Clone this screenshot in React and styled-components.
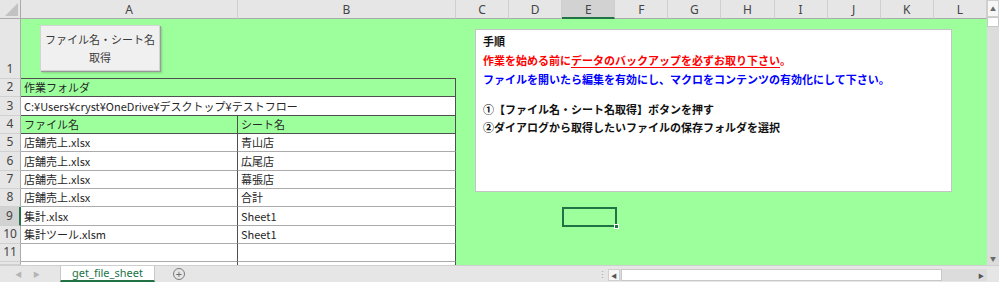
import React from 'react';
import styled, { createGlobalStyle } from 'styled-components';

const GREEN = '#9cff9c';
const DARK = '#4f4f4f';
const HAIR = '#ababab';
const HEAD = '#e6e6e6';
const HEAD_SEL = '#d2d2d2';
const XL = '#217346';
const CJK = '"Noto Sans CJK JP", "Noto Sans", sans-serif';

const GlobalStyle = createGlobalStyle`
  html, body { margin: 0; padding: 0; background: #ffffff; }
  body { width: 1006px; height: 292px; overflow: hidden; font-family: ${CJK}; }
`;

const Window = styled.div`
  width: 1006px;
  height: 292px;
  background: #ffffff;
  display: flex;
  flex-direction: column;
`;

const Sheet = styled.div`
  position: relative;
  display: grid;
  grid-template-columns: 21px 217px 218px repeat(10, 53.1px) 12px 7px;
  grid-template-rows: 19px 60px 18px 19px 18px 18px 19px 18px 18px 19px 18px 18px 3px;
`;

const Corner = styled.div`
  grid-column: 1;
  grid-row: 1;
  position: relative;
  background: ${HEAD};
  border-right: 1px solid ${HAIR};
  border-bottom: 1px solid ${HAIR};
  box-sizing: border-box;
  &::after {
    content: '';
    position: absolute;
    right: 2px;
    bottom: 2px;
    border-style: solid;
    border-width: 0 0 13px 13px;
    border-color: transparent transparent #c2c2c2 transparent;
  }
`;

const ColHead = styled.div`
  grid-column: ${p => p.$c};
  grid-row: 1;
  box-sizing: border-box;
  background: ${p => (p.$sel ? HEAD_SEL : HEAD)};
  border-right: 1px solid #cfcfcf;
  border-bottom: ${p => (p.$sel ? `2px solid ${XL}` : `1px solid ${HAIR}`)};
  display: flex;
  align-items: center;
  justify-content: center;
  font-family: "Noto Sans", sans-serif;
  font-size: 12px;
  color: #444;
  padding-top: ${p => (p.$sel ? '1px' : '0')};
`;

const RowHead = styled.div`
  grid-column: 1;
  grid-row: ${p => p.$r};
  box-sizing: border-box;
  background: ${p => (p.$sel ? HEAD_SEL : HEAD)};
  border-right: ${p => (p.$sel ? `2px solid ${XL}` : `1px solid ${HAIR}`)};
  border-bottom: 1px solid #d0d0d0;
  display: flex;
  align-items: flex-end;
  justify-content: center;
  padding-bottom: 1px;
  line-height: 16px;
  font-family: "Noto Sans", sans-serif;
  font-size: 12px;
  color: #444;
  overflow: hidden;
`;

const Cell = styled.div`
  grid-column: ${p => p.$c};
  grid-row: ${p => p.$r};
  box-sizing: border-box;
  background: ${p => (p.$green ? GREEN : '#ffffff')};
  border-right: ${p => (p.$br ? `1px solid ${DARK}` : 'none')};
  border-bottom: ${p => (p.$bb === 'dark' ? `1px solid ${DARK}` : p.$bb === 'hair' ? `1px solid ${HAIR}` : 'none')};
  display: flex;
  align-items: flex-end;
  padding: 0 0 1px 3px;
  line-height: 16px;
  font-family: ${CJK};
  font-size: 11px;
  color: #262626;
  white-space: nowrap;
`;

const GreenField = styled.div`
  grid-column: 4 / 14;
  grid-row: 2 / 14;
  background: ${GREEN};
`;

const VScroll = styled.div`
  grid-column: 14;
  grid-row: 1 / 14;
  background: #dcdcdc;
  display: flex;
  flex-direction: column;
  align-items: stretch;
`;

const ArrowBox = styled.div`
  height: ${p => p.$h}px;
  display: flex;
  align-items: center;
  justify-content: center;
  font-size: 6px;
  color: #6a6a6a;
  background: ${p => (p.$white ? '#f7f7f7' : 'transparent')};
  box-sizing: border-box;
  border: ${p => (p.$white ? '1px solid #cfcfcf' : 'none')};
`;

const VThumb = styled.div`
  height: 10px;
  background: #ffffff;
  border: 1px solid #c8c8c8;
  box-sizing: border-box;
`;

const Track = styled.div`
  flex: 1;
`;

const MacroButton = styled.div`
  position: absolute;
  left: 40px;
  top: 25px;
  width: 120px;
  height: 46px;
  box-sizing: border-box;
  background: #f0f0f0;
  border: 1px solid #d4d4d4;
  box-shadow: 1px 1px 0 #9a9a9a, 2px 2px 2px rgba(0, 0, 0, 0.18);
  display: flex;
  flex-direction: column;
  align-items: center;
  justify-content: center;
  font-family: ${CJK};
  font-size: 11px;
  line-height: 18px;
  color: #3a3a3a;
`;

const NoteBox = styled.div`
  position: absolute;
  left: 475px;
  top: 29px;
  width: 477px;
  height: 163px;
  box-sizing: border-box;
  background: #ffffff;
  border: 1px solid #c4c4c4;
  padding: 2px 0 0 7px;
  font-family: ${CJK};
  font-size: 11px;
  font-weight: 700;
  line-height: 19px;
`;

const NoteLine = styled.div`
  color: ${p => p.$color || '#111'};
  margin-top: ${p => p.$mt || 0}px;
  white-space: nowrap;
`;

const Underlined = styled.span`
  text-decoration: underline;
  text-decoration-thickness: 1px;
  text-underline-offset: 2px;
`;

const Selection = styled.div`
  position: absolute;
  left: 562px;
  top: 207px;
  width: 55px;
  height: 20px;
  box-sizing: border-box;
  border: 2px solid ${XL};
  &::after {
    content: '';
    position: absolute;
    right: -4px;
    bottom: -4px;
    width: 5px;
    height: 5px;
    box-sizing: border-box;
    background: ${XL};
    border: 1px solid #ffffff;
  }
`;

const TabBar = styled.div`
  width: 999px;
  height: 17px;
  background: #e6e6e6;
  border-top: 1px solid #cfcfcf;
  box-sizing: border-box;
  display: flex;
  align-items: stretch;
`;

const Nav = styled.div`
  width: 60px;
  display: flex;
  align-items: center;
  gap: 11px;
  padding-left: 15px;
  box-sizing: border-box;
  font-size: 7px;
  color: #b5b5b5;
`;

const Tab = styled.div`
  width: 95px;
  background: #ffffff;
  box-sizing: border-box;
  border-left: 1px solid #c8c8c8;
  border-right: 1px solid #c8c8c8;
  border-bottom: 2px solid ${XL};
  display: flex;
  align-items: center;
  justify-content: center;
  font-family: "Noto Sans", sans-serif;
  font-size: 11px;
  color: ${XL};
  line-height: 14px;
`;

const PlusWrap = styled.div`
  width: 45px;
  display: flex;
  align-items: center;
  padding-left: 18px;
  box-sizing: border-box;
`;

const Plus = styled.div`
  width: 12px;
  height: 12px;
  border-radius: 50%;
  border: 1px solid #7a7a7a;
  box-sizing: border-box;
  display: flex;
  align-items: center;
  justify-content: center;
  font-family: "Noto Sans", sans-serif;
  font-size: 11px;
  line-height: 10px;
  color: #6a6a6a;
`;

const Spacer = styled.div`
  flex: 1;
`;

const Dots = styled.div`
  width: 12px;
  display: flex;
  align-items: center;
  justify-content: center;
  font-size: 9px;
  color: #a0a0a0;
`;

const HScroll = styled.div`
  width: 379px;
  height: 12px;
  margin-top: 3px;
  margin-right: 12px;
  display: flex;
  align-items: stretch;
  background: #dcdcdc;
`;

const HArrow = styled.div`
  width: ${p => p.$w}px;
  display: flex;
  align-items: center;
  justify-content: center;
  font-size: 6px;
  color: #555;
  background: ${p => (p.$white ? '#f7f7f7' : 'transparent')};
  box-sizing: border-box;
  border: ${p => (p.$white ? '1px solid #cfcfcf' : 'none')};
`;

const HThumb = styled.div`
  width: 321px;
  margin-left: 1px;
  background: #ffffff;
  border: 1px solid #c8c8c8;
  box-sizing: border-box;
`;

const COLS = ['A', 'B', 'C', 'D', 'E', 'F', 'G', 'H', 'I', 'J', 'K', 'L'];

const rows = [
  ['店舗売上.xlsx', '青山店'],
  ['店舗売上.xlsx', '広尾店'],
  ['店舗売上.xlsx', '幕張店'],
  ['店舗売上.xlsx', '合計'],
  ['集計.xlsx', 'Sheet1'],
  ['集計ツール.xlsm', 'Sheet1'],
  ['', ''],
];

export default function App() {
  return (
    <Window>
      <GlobalStyle />
      <Sheet>
        <Corner />
        {COLS.map((c, i) => (
          <ColHead key={c} $c={i + 2} $sel={c === 'E'}>
            {c}
          </ColHead>
        ))}
        {Array.from({ length: 12 }, (_, i) => (
          <RowHead key={i} $r={i + 2} $sel={i + 1 === 9}>
            {i < 11 ? i + 1 : ''}
          </RowHead>
        ))}

        <Cell $c="2 / 4" $r={2} $green $bb="dark" />
        <Cell $c="2 / 4" $r={3} $green $br $bb="dark">作業フォルダ</Cell>
        <Cell $c="2 / 4" $r={4} $br $bb="dark">
          C:¥Users¥cryst¥OneDrive¥デスクトップ¥テストフロー
        </Cell>
        <Cell $c={2} $r={5} $green $br $bb="dark">ファイル名</Cell>
        <Cell $c={3} $r={5} $green $br $bb="dark">シート名</Cell>
        {rows.map(([f, s], i) => (
          <React.Fragment key={i}>
            <Cell $c={2} $r={i + 6} $br $bb="hair">{f}</Cell>
            <Cell $c={3} $r={i + 6} $br $bb="hair">{s}</Cell>
          </React.Fragment>
        ))}
        <Cell $c={2} $r={13} $br />
        <Cell $c={3} $r={13} $br />

        <GreenField />

        <VScroll>
          <ArrowBox $h={17} $white>▲</ArrowBox>
          <VThumb />
          <Track />
          <ArrowBox $h={14}>▼</ArrowBox>
        </VScroll>

        <MacroButton>
          <div>ファイル名・シート名</div>
          <div>取得</div>
        </MacroButton>

        <NoteBox>
          <NoteLine>手順</NoteLine>
          <NoteLine $color="#ff0000">
            作業を始める前に<Underlined>データのバックアップを必ずお取り下さい</Underlined>。
          </NoteLine>
          <NoteLine $color="#0000ff">
            ファイルを開いたら編集を有効にし、マクロをコンテンツの有効化にして下さい。
          </NoteLine>
          <NoteLine $mt={11}>①【ファイル名・シート名取得】ボタンを押す</NoteLine>
          <NoteLine $mt={-1}>②ダイアログから取得したいファイルの保存フォルダを選択</NoteLine>
        </NoteBox>

        <Selection />
      </Sheet>

      <TabBar>
        <Nav>
          <span>◀</span>
          <span>▶</span>
        </Nav>
        <Tab>get_file_sheet</Tab>
        <PlusWrap>
          <Plus>+</Plus>
        </PlusWrap>
        <Spacer />
        <Dots>⋮</Dots>
        <HScroll>
          <HArrow $w={12} $white>◀</HArrow>
          <HThumb />
          <Spacer />
          <HArrow $w={12}>▶</HArrow>
        </HScroll>
      </TabBar>
    </Window>
  );
}
